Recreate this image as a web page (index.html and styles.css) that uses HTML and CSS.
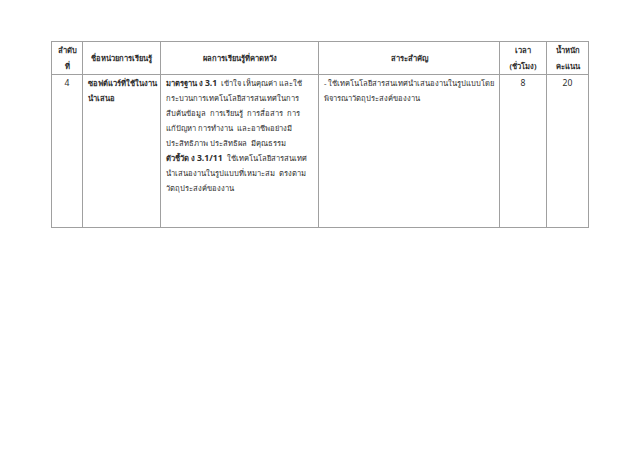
FILE: index.html
```html
<!DOCTYPE html>
<html lang="th">
<head>
<meta charset="utf-8">
<link rel="stylesheet" href="styles.css">
</head>
<body>
<table class="grid">
  <colgroup>
    <col class="c1"><col class="c2"><col class="c3"><col class="c4"><col class="c5"><col class="c6">
  </colgroup>
  <thead>
    <tr>
      <th>ลำดับ<br>ที่</th>
      <th>ชื่อหน่วยการเรียนรู้</th>
      <th>ผลการเรียนรู้ที่คาดหวัง</th>
      <th>สาระสำคัญ</th>
      <th>เวลา<br>(ชั่วโมง)</th>
      <th>น้ำหนัก<br>คะแนน</th>
    </tr>
  </thead>
  <tbody>
    <tr class="row">
      <td class="center"><span class="num">4</span></td>
      <td class="bold">ซอฟต์แวร์ที่ใช้ในงาน<br>นำเสนอ</td>
      <td><b>มาตรฐาน ง <span class="num">3.1</span></b>&nbsp; เข้าใจ เห็นคุณค่า และใช้<br>กระบวนการเทคโนโลยีสารสนเทศในการ<br>สืบค้นข้อมูล&nbsp; การเรียนรู้&nbsp; การสื่อสาร&nbsp; การ<br>แก้ปัญหา การทำงาน&nbsp; และอาชีพอย่างมี<br>ประสิทธิภาพ ประสิทธิผล&nbsp; มีคุณธรรม<br><b>ตัวชี้วัด ง <span class="num">3.1/11</span></b>&nbsp; ใช้เทคโนโลยีสารสนเทศ<br>นำเสนองานในรูปแบบที่เหมาะสม&nbsp; ตรงตาม<br>วัตถุประสงค์ของงาน</td>
      <td>- ใช้เทคโนโลยีสารสนเทศนำเสนองานในรูปแบบโดย<br>พิจารณาวัตถุประสงค์ของงาน</td>
      <td class="center"><span class="num">8</span></td>
      <td class="center"><span class="num">20</span></td>
    </tr>
  </tbody>
</table>
</body>
</html>
```
FILE: styles.css
```css
html, body {
  margin: 0;
  padding: 0;
  background: #ffffff;
}
body {
  padding: 41px 0 0 51px;
  font-family: "Noto Sans", "Liberation Sans", sans-serif;
  color: #2e2e2e;
  font-size: 7.6px;
}
.grid {
  border-collapse: collapse;
  table-layout: fixed;
  width: 537px;
}
.c1 { width: 31px; }
.c2 { width: 78px; }
.c3 { width: 158px; }
.c4 { width: 181px; }
.c5 { width: 47px; }
.c6 { width: 42px; }
.grid th, .grid td {
  border: 1px solid #a0a0a0;
  padding: 0 5px;
  line-height: 15px;
  vertical-align: top;
  white-space: nowrap;
  overflow: hidden;
}
.grid th {
  height: 32px;
  vertical-align: middle;
  text-align: center;
  font-weight: bold;
  line-height: 16px;
}
.row td {
  height: 151px;
  padding-top: 1px;
}
.num {
  font-size: 8.6px;
}
.center { text-align: center; }
.bold { font-weight: bold; }
```
